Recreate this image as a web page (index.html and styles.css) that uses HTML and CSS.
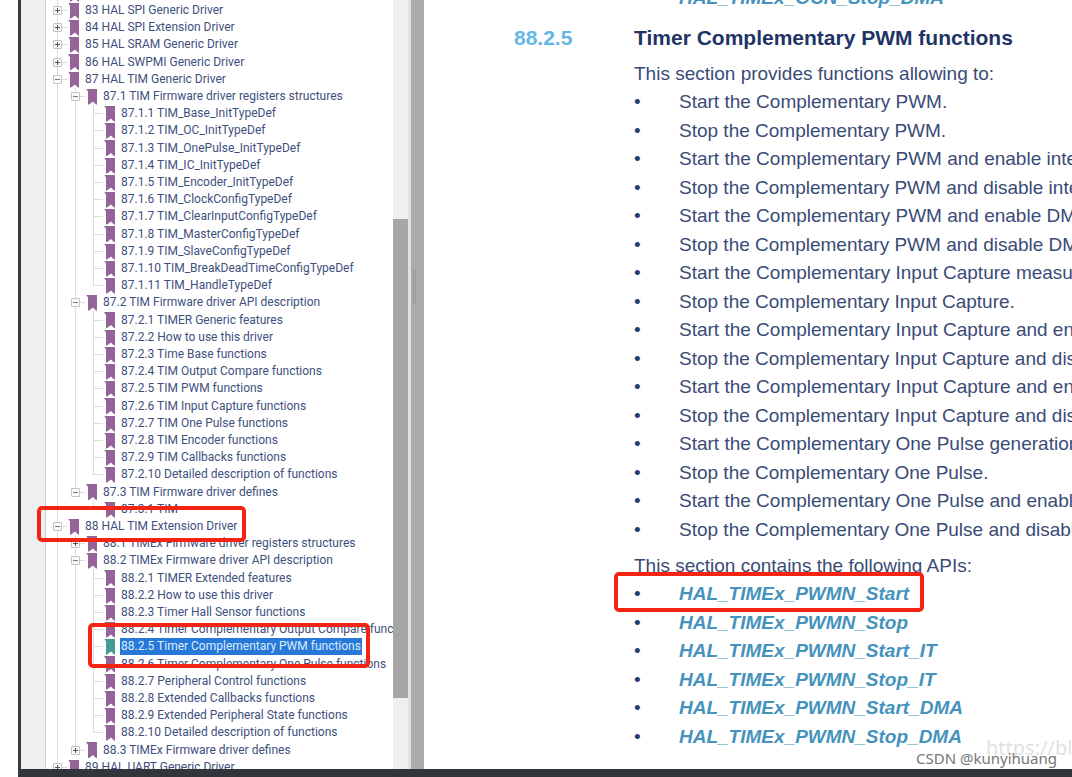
FILE: index.html
```html
<!DOCTYPE html>
<html lang="en">
<head>
<meta charset="utf-8">
<title>Timer Complementary PWM functions</title>
<link rel="stylesheet" href="styles.css">
</head>
<body>
<div class="viewer">
  <div class="rail"></div>
  <nav class="bookmarks" aria-label="Bookmarks">
    <ul class="tree">
      <li class="l1"><span class="mark"></span></li>
      <li class="l1"><button class="toggle plus" aria-label="Expand"></button><span class="mark"></span><span class="label">83 HAL SPI Generic Driver</span></li>
      <li class="l1"><button class="toggle plus" aria-label="Expand"></button><span class="mark"></span><span class="label">84 HAL SPI Extension Driver</span></li>
      <li class="l1"><button class="toggle plus" aria-label="Expand"></button><span class="mark"></span><span class="label">85 HAL SRAM Generic Driver</span></li>
      <li class="l1"><button class="toggle plus" aria-label="Expand"></button><span class="mark"></span><span class="label">86 HAL SWPMI Generic Driver</span></li>
      <li class="l1"><button class="toggle" aria-label="Collapse"></button><span class="mark"></span><span class="label">87 HAL TIM Generic Driver</span></li>
      <li class="l2"><button class="toggle" aria-label="Collapse"></button><span class="mark"></span><span class="label">87.1 TIM Firmware driver registers structures</span></li>
      <li class="l3"><span class="mark"></span><span class="label">87.1.1 TIM_Base_InitTypeDef</span></li>
      <li class="l3"><span class="mark"></span><span class="label">87.1.2 TIM_OC_InitTypeDef</span></li>
      <li class="l3"><span class="mark"></span><span class="label">87.1.3 TIM_OnePulse_InitTypeDef</span></li>
      <li class="l3"><span class="mark"></span><span class="label">87.1.4 TIM_IC_InitTypeDef</span></li>
      <li class="l3"><span class="mark"></span><span class="label">87.1.5 TIM_Encoder_InitTypeDef</span></li>
      <li class="l3"><span class="mark"></span><span class="label">87.1.6 TIM_ClockConfigTypeDef</span></li>
      <li class="l3"><span class="mark"></span><span class="label">87.1.7 TIM_ClearInputConfigTypeDef</span></li>
      <li class="l3"><span class="mark"></span><span class="label">87.1.8 TIM_MasterConfigTypeDef</span></li>
      <li class="l3"><span class="mark"></span><span class="label">87.1.9 TIM_SlaveConfigTypeDef</span></li>
      <li class="l3"><span class="mark"></span><span class="label">87.1.10 TIM_BreakDeadTimeConfigTypeDef</span></li>
      <li class="l3 last"><span class="mark"></span><span class="label">87.1.11 TIM_HandleTypeDef</span></li>
      <li class="l2"><button class="toggle" aria-label="Collapse"></button><span class="mark"></span><span class="label">87.2 TIM Firmware driver API description</span></li>
      <li class="l3"><span class="mark"></span><span class="label">87.2.1 TIMER Generic features</span></li>
      <li class="l3"><span class="mark"></span><span class="label">87.2.2 How to use this driver</span></li>
      <li class="l3"><span class="mark"></span><span class="label">87.2.3 Time Base functions</span></li>
      <li class="l3"><span class="mark"></span><span class="label">87.2.4 TIM Output Compare functions</span></li>
      <li class="l3"><span class="mark"></span><span class="label">87.2.5 TIM PWM functions</span></li>
      <li class="l3"><span class="mark"></span><span class="label">87.2.6 TIM Input Capture functions</span></li>
      <li class="l3"><span class="mark"></span><span class="label">87.2.7 TIM One Pulse functions</span></li>
      <li class="l3"><span class="mark"></span><span class="label">87.2.8 TIM Encoder functions</span></li>
      <li class="l3"><span class="mark"></span><span class="label">87.2.9 TIM Callbacks functions</span></li>
      <li class="l3 last"><span class="mark"></span><span class="label">87.2.10 Detailed description of functions</span></li>
      <li class="l2 last"><button class="toggle" aria-label="Collapse"></button><span class="mark"></span><span class="label">87.3 TIM Firmware driver defines</span></li>
      <li class="l3 last closed"><span class="mark"></span><span class="label">87.3.1 TIM</span></li>
      <li class="l1"><button class="toggle" aria-label="Collapse"></button><span class="mark"></span><span class="label">88 HAL TIM Extension Driver</span></li>
      <li class="l2"><button class="toggle plus" aria-label="Expand"></button><span class="mark"></span><span class="label">88.1 TIMEx Firmware driver registers structures</span></li>
      <li class="l2"><button class="toggle" aria-label="Collapse"></button><span class="mark"></span><span class="label">88.2 TIMEx Firmware driver API description</span></li>
      <li class="l3"><span class="mark"></span><span class="label">88.2.1 TIMER Extended features</span></li>
      <li class="l3"><span class="mark"></span><span class="label">88.2.2 How to use this driver</span></li>
      <li class="l3"><span class="mark"></span><span class="label">88.2.3 Timer Hall Sensor functions</span></li>
      <li class="l3"><span class="mark"></span><span class="label">88.2.4 Timer Complementary Output Compare functions</span></li>
      <li class="l3 selected"><span class="mark"></span><span class="label">88.2.5 Timer Complementary PWM functions</span></li>
      <li class="l3"><span class="mark"></span><span class="label">88.2.6 Timer Complementary One Pulse functions</span></li>
      <li class="l3"><span class="mark"></span><span class="label">88.2.7 Peripheral Control functions</span></li>
      <li class="l3"><span class="mark"></span><span class="label">88.2.8 Extended Callbacks functions</span></li>
      <li class="l3"><span class="mark"></span><span class="label">88.2.9 Extended Peripheral State functions</span></li>
      <li class="l3 last"><span class="mark"></span><span class="label">88.2.10 Detailed description of functions</span></li>
      <li class="l2 last"><button class="toggle plus" aria-label="Expand"></button><span class="mark"></span><span class="label">88.3 TIMEx Firmware driver defines</span></li>
      <li class="l1"><button class="toggle plus" aria-label="Expand"></button><span class="mark"></span><span class="label">89 HAL UART Generic Driver</span></li>
    </ul>
  </nav>
  <div class="scrollbar"><div class="thumb"></div></div>
  <div class="splitter"><div class="grip"></div></div>
  <main class="page">
    <ul class="items apis">
      <li><a href="#ocn-stop-dma">HAL_TIMEx_OCN_Stop_DMA</a></li>
    </ul>
    <h2 class="heading"><span class="number">88.2.5</span><span>Timer Complementary PWM functions</span></h2>
    <p class="intro">This section provides functions allowing to:</p>
    <ul class="items">
      <li>Start the Complementary PWM.</li>
      <li>Stop the Complementary PWM.</li>
      <li>Start the Complementary PWM and enable interrupts.</li>
      <li>Stop the Complementary PWM and disable interrupts.</li>
      <li>Start the Complementary PWM and enable DMA transfers.</li>
      <li>Stop the Complementary PWM and disable DMA transfers.</li>
      <li>Start the Complementary Input Capture measurement.</li>
      <li>Stop the Complementary Input Capture.</li>
      <li>Start the Complementary Input Capture and enable interrupts.</li>
      <li>Stop the Complementary Input Capture and disable interrupts.</li>
      <li>Start the Complementary Input Capture and enable DMA transfers.</li>
      <li>Stop the Complementary Input Capture and disable DMA transfers.</li>
      <li>Start the Complementary One Pulse generation.</li>
      <li>Stop the Complementary One Pulse.</li>
      <li>Start the Complementary One Pulse and enable interrupts.</li>
      <li>Stop the Complementary One Pulse and disable interrupts.</li>
    </ul>
    <p class="intro second">This section contains the following APIs:</p>
    <ul class="items apis">
      <li><a href="#start">HAL_TIMEx_PWMN_Start</a></li>
      <li><a href="#stop">HAL_TIMEx_PWMN_Stop</a></li>
      <li><a href="#start-it">HAL_TIMEx_PWMN_Start_IT</a></li>
      <li><a href="#stop-it">HAL_TIMEx_PWMN_Stop_IT</a></li>
      <li><a href="#start-dma">HAL_TIMEx_PWMN_Start_DMA</a></li>
      <li><a href="#stop-dma">HAL_TIMEx_PWMN_Stop_DMA</a></li>
    </ul>
  </main>
</div>
<div class="callout driver"></div>
<div class="callout section"></div>
<div class="callout api"></div>
<div class="watermark url">https://bl</div>
<div class="watermark author">CSDN @kunyihuang</div>
</body>
</html>
```

FILE: styles.css
```css
* { box-sizing: border-box; }

body {
  position: relative;
  margin: 0;
  height: 100vh;
  overflow: hidden;
  background: #fff;
  font-family: "Liberation Sans", Arial, sans-serif;
}

ul { margin: 0; padding: 0; list-style: none; }

.viewer {
  display: flex;
  height: 100vh;
  margin-left: 18px;
  border-left: 3px solid #343b41;
  border-bottom: 8px solid #31363a;
  overflow: hidden;
}

.rail {
  flex: none;
  width: 25px;
  background: #efefef;
  border-right: 1px solid #cfcfcf;
}

/* Bookmark tree */
.bookmarks {
  flex: none;
  width: 347px;
  padding-right: 1px;
  overflow: hidden;
}

.tree {
  margin-top: -15px;
  color: #40507e;
  font-family: Roboto, "DejaVu Sans Condensed", sans-serif;
  font-size: 12px;
  white-space: nowrap;
}

.tree li {
  --line: linear-gradient(#dcdcdc, #dcdcdc);
  --stem: 100%;
  display: flex;
  align-items: center;
  height: 17px;
  background-repeat: no-repeat;
}

.tree li:nth-child(5n) { height: 18px; }
.tree .last { --stem: 50%; }

.tree .l1 {
  padding-left: 7px;
  background-image: var(--line), var(--line);
  background-position: 11px 0, 11px 50%;
  background-size: 1px 100%, 10px 1px;
}

.tree .l1:first-child { padding-left: 22px; }

.tree .l2 {
  padding-left: 25px;
  background-image: var(--line), var(--line), var(--line);
  background-position: 11px 0, 29px 0, 29px 50%;
  background-size: 1px 100%, 1px var(--stem), 10px 1px;
}

.tree .l3 {
  padding-left: 58px;
  background-image: var(--line), var(--line), var(--line), var(--line);
  background-position: 11px 0, 47px 0, 47px 50%, 29px 0;
  background-size: 1px 100%, 1px var(--stem), 10px 1px, 1px 100%;
}

.tree .closed { background-size: 1px 100%, 1px 50%, 10px 1px, 0 0; }

.toggle {
  flex: none;
  width: 9px;
  height: 9px;
  margin: 0 6px 0 0;
  padding: 0;
  border: 1px solid #c4c4c4;
  border-radius: 1px;
  background: linear-gradient(#777, #777) center / 5px 1px no-repeat, #fafafa;
}

.toggle.plus {
  background:
    linear-gradient(#555, #555) center / 5px 1px no-repeat,
    linear-gradient(#555, #555) center / 1px 5px no-repeat,
    #fafafa;
}

.mark {
  flex: none;
  width: 11px;
  height: 16px;
  margin-right: 5px;
  background: #946399;
  clip-path: polygon(0 0, 11px 0, 11px 16px, 10px 16px, 7px 13px, 3px 16px, 2px 16px, 2px 3px);
}

.label {
  padding: 0 1px;
  line-height: 17px;
}

.selected .mark { background: #439b94; }
.selected .label { background: #2878d7; color: #d9ecff; }

.scrollbar {
  display: flex;
  flex: none;
  flex-direction: column;
  width: 15px;
  background: #efefef;
}

.scrollbar::before { content: ""; flex: 219; }
.scrollbar::after { content: ""; flex: 71; }
.thumb { flex: 479; background: #a6a6a6; }

.splitter {
  display: flex;
  flex: none;
  align-items: flex-start;
  width: 16px;
  padding-top: 270px;
  border-left: 3px solid #e2e2e2;
  background: #ababab;
}

.grip { width: 3px; height: 34px; margin-left: 2px; background: #a0a0a0; }

/* Manual page */
.page {
  flex: 1;
  min-width: 0;
  margin-top: -16px;
  padding-left: 210px;
  overflow: hidden;
  color: #3a4b76;
  font-size: 19px;
  line-height: 28px;
  white-space: nowrap;
}

.heading {
  display: flex;
  margin: 14px 0 10px -120px;
  color: #1f3465;
  font-size: 21px;
  line-height: 24px;
}

.number { flex: none; width: 120px; color: #63b8e5; }
.intro { margin: 0; }
.second { margin-top: 8px; }

.items li { display: flex; }
.items li:nth-child(even) { line-height: 29px; }
.items li::before { content: "•"; flex: none; width: 45px; color: #283c6e; }

.apis a {
  color: #4593bd;
  font-style: italic;
  font-weight: bold;
  text-decoration: none;
}

/* Overlays */
.callout {
  position: absolute;
  border: 4px solid #f32414;
  border-radius: 5px;
}

.driver { left: 37px; top: 506px; width: 209px; height: 36px; }
.section { left: 88px; top: 623px; width: 282px; height: 45px; }
.api { left: 614px; top: 572px; width: 310px; height: 40px; }

.watermark { position: absolute; white-space: nowrap; }

.url {
  left: 986px;
  top: 734px;
  color: #e2e2e2;
  font: 20px/28px "Noto Sans", sans-serif;
}

.author {
  right: 15px;
  top: 748px;
  color: #777;
  font: 15px/20px "Noto Sans", sans-serif;
  text-shadow: 1px 1px 0 #fff;
}
```
